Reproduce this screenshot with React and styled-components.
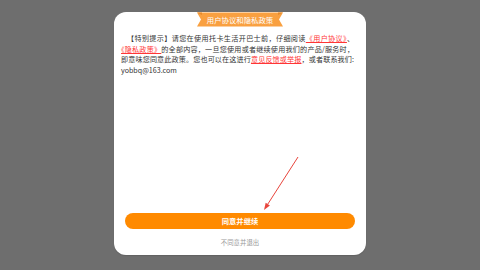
import React from "react";
import styled, { createGlobalStyle } from "styled-components";

const Global = createGlobalStyle`
  html, body { margin: 0; padding: 0; }
  body {
    background: #6e6e6e;
    width: 480px;
    height: 270px;
    overflow: hidden;
    font-family: "Noto Sans CJK SC", "Noto Sans", sans-serif;
  }
`;

const Screen = styled.div`
  width: 480px;
  height: 270px;
  display: flex;
  justify-content: center;
  align-items: flex-start;
  padding-top: 12px;
  box-sizing: border-box;
`;

const Card = styled.div`
  position: relative;
  width: 252px;
  height: 243px;
  background: #ffffff;
  border-radius: 12px;
  display: flex;
  flex-direction: column;
  align-items: center;
  box-sizing: border-box;
  padding-bottom: 7px;
  box-shadow: 0 1px 1px rgba(0, 0, 0, 0.12);
`;

const Banner = styled.div`
  position: relative;
  width: 86px;
  height: 15px;
  display: flex;
  align-items: center;
  justify-content: center;
`;

const BannerShape = styled.svg`
  position: absolute;
  inset: 0;
`;

const BannerText = styled.span`
  position: relative;
  color: #ffffff;
  font-size: 7.4px;
  line-height: 15px;
`;

const Body = styled.p`
  align-self: stretch;
  margin: 6px 12px 0 7px;
  font-size: 7.1px;
  line-height: 10.7px;
  color: #333333;
  text-align: justify;
  text-indent: 6px;
`;

const Link = styled.span`
  color: #ff3535;
  text-decoration: underline;
  white-space: nowrap;
`;

const Spacer = styled.div`
  flex: 1;
`;

const AgreeButton = styled.button`
  align-self: stretch;
  margin: 0 11px;
  height: 16px;
  border: none;
  border-radius: 8px;
  background: #ff8a00;
  color: #ffffff;
  font-family: inherit;
  font-size: 7.3px;
  font-weight: 700;
  padding: 0;
  display: flex;
  align-items: center;
  justify-content: center;
`;

const Decline = styled.div`
  margin-top: 9px;
  font-size: 6.4px;
  line-height: 10px;
  color: #9a9a9a;
`;

const ArrowLayer = styled.svg`
  position: absolute;
  left: 0;
  top: 0;
  pointer-events: none;
`;

export default function App() {
  return (
    <>
      <Global />
      <Screen>
        <Card>
          <Banner>
            <BannerShape width="86" height="15" viewBox="0 0 86 15">
              <path d="M0 0.5 H86 L82 7.5 L86 14.5 H0 L4 7.5 Z" fill="#f9a040" />
              <path d="M0 0.5 L5 0.5 L5 3 Z" fill="#e58a2a" />
              <path d="M86 0.5 L81 0.5 L81 3 Z" fill="#e58a2a" />
            </BannerShape>
            <BannerText>用户协议和隐私政策</BannerText>
          </Banner>
          <Body>
            【特别提示】请您在使用托卡生活开巴士前，仔细阅读<Link>《用户协议》</Link>、
            <Link>《隐私政策》</Link>的全部内容，一旦您使用或者继续使用我们的产品/服务时，即意味您同意此政策。您也可以在这进行
            <Link>意见反馈或举报</Link>，或者联系我们: yobbq@163.com
          </Body>
          <Spacer />
          <AgreeButton>同意并继续</AgreeButton>
          <Decline>不同意并退出</Decline>
          <ArrowLayer width="252" height="243" viewBox="0 0 252 243">
            <line x1="184" y1="145" x2="153.8" y2="192.1" stroke="#e8453c" strokeWidth="1" />
            <polygon points="150,198 155.9,193.5 151.7,190.8" fill="#e8453c" />
          </ArrowLayer>
        </Card>
      </Screen>
    </>
  );
}
